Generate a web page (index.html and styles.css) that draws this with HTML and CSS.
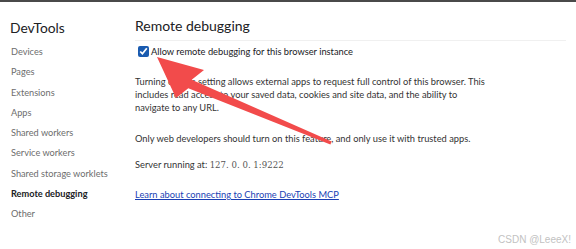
FILE: index.html
```html
<!DOCTYPE html>
<html lang="en">

<head>
    <meta charset="UTF-8">
    <meta name="viewport" content="width=device-width, initial-scale=1.0">
    <title>Inspect with Chrome Developer Tools</title>
    <link rel="stylesheet" href="styles.css">
</head>

<body>

    <div class="page">
        <!-- Sidebar -->
        <nav class="sidebar">
            <h1>DevTools</h1>
            <ul class="menu">
                <li>Devices</li>
                <li>Pages</li>
                <li>Extensions</li>
                <li>Apps</li>
                <li>Shared workers</li>
                <li>Service workers</li>
                <li>Shared storage worklets</li>
                <li class="selected">Remote debugging</li>
                <li>Other</li>
            </ul>
        </nav>

        <!-- Content -->
        <main class="content">
            <h2>Remote debugging</h2>
            <label class="checkbox">
                <input type="checkbox" checked>
                <span>Allow remote debugging for this browser instance</span>
            </label>
            <p class="intro">Turning on this setting allows external apps to request full control of this browser. This includes read access to your saved data, cookies and site data, and the ability to navigate to any URL.</p>
            <p class="warn">Only web developers should turn on this feature, and only use it with trusted apps.</p>
            <p class="server">Server running at: <span class="addr">127. 0. 0. 1:9222</span></p>
            <p class="learn"><a href="#">Learn about connecting to Chrome DevTools MCP</a></p>
        </main>
    </div>

    <!-- Annotation arrow -->
    <svg class="arrow" width="576" height="249" viewBox="0 0 576 249">
        <polygon points="157,57 204,70 191.7,79.8 331.6,141.6 330.4,144.4 188.3,88.2 176,98" fill="#f24b4b" />
    </svg>

    <div class="watermark">CSDN @LeeeX!</div>

</body>

</html>
```

FILE: styles.css
```css
* {
    box-sizing: border-box;
    margin: 0;
    padding: 0;
}

body {
    font-family: Lato, 'Noto Sans', sans-serif;
    background-color: #fff;
    color: #303942;
    width: 576px;
    height: 249px;
    overflow: hidden;
    border-top: 2px solid #4a4a4a;
    position: relative;
}

.page {
    display: flex;
}

.sidebar {
    width: 135px;
    flex-shrink: 0;
    padding: 15px 0 0 10px;
}

.sidebar h1 {
    font-size: 13.8px;
    font-weight: normal;
    color: #202124;
    line-height: 22px;
    margin-bottom: 3px;
}

.menu {
    list-style: none;
}

.menu li {
    font-size: 9.2px;
    line-height: 20.3px;
    color: #6d6d6d;
    padding-left: 1px;
}

.menu li.selected {
    color: #202124;
    font-weight: bold;
}

.content {
    flex: 1;
    padding: 13px 0 0 0;
}

.content h2 {
    font-size: 14px;
    font-weight: normal;
    color: #202124;
    line-height: 22px;
    padding-bottom: 3px;
    border-bottom: 1px solid #f0f0f0;
    margin-right: 10px;
}

.checkbox {
    display: flex;
    align-items: center;
    gap: 2px;
    margin: 4px 0 0 3px;
    font-size: 9.3px;
    line-height: 13px;
    color: #202124;
}

.checkbox input {
    width: 11px;
    height: 11px;
    accent-color: #1a5bb0;
    margin: 0;
}

.content p {
    font-size: 9.3px;
    line-height: 13px;
    color: #333;
    max-width: 356px;
}

.content .intro {
    margin-top: 17px;
}

.content .warn {
    margin-top: 18px;
}

.content .server {
    margin-top: 13px;
}

.content .learn {
    margin-top: 16px;
}

.addr {
    font-family: 'DejaVu Serif', 'Liberation Serif', serif;
    font-size: 8.6px;
    color: #555;
}

.content a {
    color: #1a3fb4;
}

.arrow {
    position: absolute;
    top: -2px;
    left: 0;
    pointer-events: none;
}

.watermark {
    position: absolute;
    right: 5px;
    bottom: 4px;
    font-family: 'Liberation Sans', sans-serif;
    font-size: 10px;
    color: #c2c2c2;
}
```
